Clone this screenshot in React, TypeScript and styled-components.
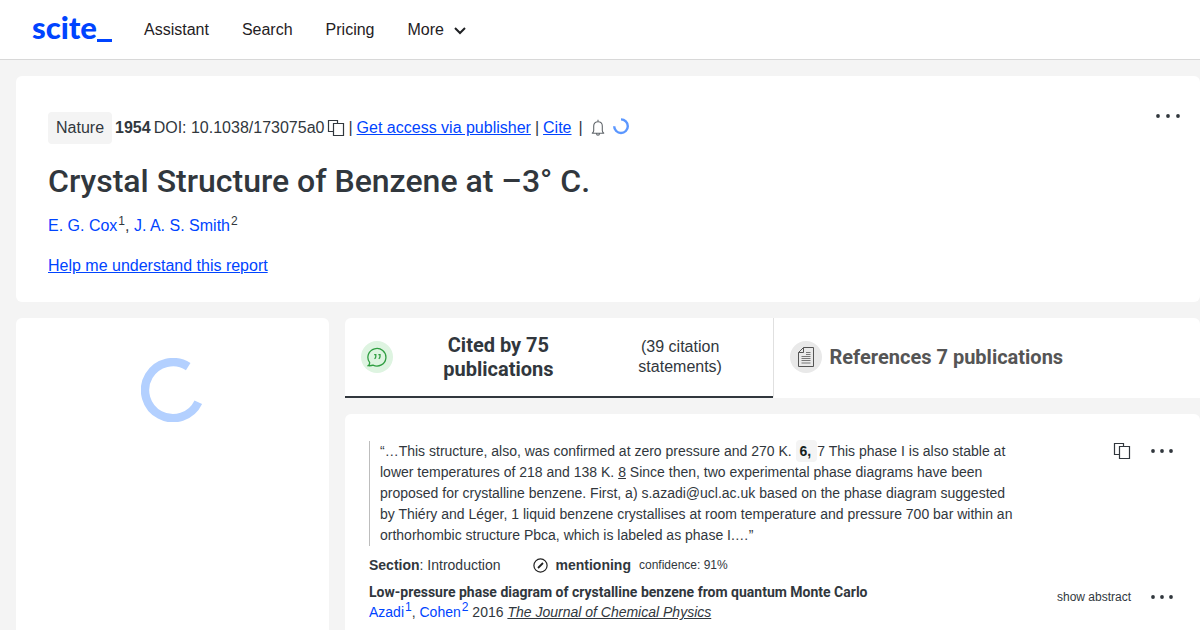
import React from 'react';
import styled, { createGlobalStyle } from 'styled-components';

const GlobalStyle = createGlobalStyle`
  *, *::before, *::after { box-sizing: border-box; }
  body {
    margin: 0;
    background: #f4f4f4;
    color: #31373d;
    font-family: "Liberation Sans", Arial, sans-serif;
    font-size: 16px;
    line-height: 24px;
  }
  h1, h2, p, blockquote { margin: 0; }
  button { font: inherit; color: inherit; background: none; border: 0; padding: 0; cursor: pointer; }
  svg { display: block; flex: none; }
`;

const headingFont = 'Roboto, "Liberation Sans", sans-serif';

const Page = styled.div`
  display: flex;
  flex-direction: column;
  height: 100vh;
  overflow: hidden;
`;

const Header = styled.header`
  display: flex;
  align-items: center;
  gap: 32px;
  flex: none;
  height: 60px;
  padding: 0 32px;
  background: #fff;
  border-bottom: 1px solid #d8d8d8;
`;

const Logo = styled.a`
  display: flex;
  align-items: flex-end;
  padding-bottom: 5px;
  color: #0044ff;
  font-family: Lato, sans-serif;
  font-size: 31px;
  font-weight: 900;
  line-height: 38px;
  text-decoration: none;
  &::after {
    content: "";
    width: 15px;
    height: 3px;
    margin-bottom: 4px;
    background: currentColor;
  }
`;

const Nav = styled.nav`
  display: flex;
  align-items: center;
  gap: 33px;
  color: #1f2124;
`;

const NavLink = styled.a`
  color: inherit;
  text-decoration: none;
`;

const NavButton = styled.button`
  display: flex;
  align-items: center;
  gap: 8px;
`;

const Content = styled.main`
  display: grid;
  grid-template-columns: 313px minmax(0, 1fr);
  grid-template-rows: auto minmax(0, 1fr);
  gap: 16px;
  flex: 1;
  min-height: 0;
  padding: 16px 0 0 16px;
`;

const Summary = styled.section`
  grid-column: 1 / -1;
  display: flex;
  justify-content: space-between;
  align-items: flex-start;
  padding: 36px 19px 24px 32px;
  background: #fff;
  border-radius: 6px;
`;

const MetaRow = styled.div`
  display: flex;
  align-items: center;
  gap: 3px;
  height: 32px;
`;

const Journal = styled.span`
  padding: 4px 8px;
  border-radius: 4px;
  background: #f4f4f4;
`;

const MetaLinks = styled.span`
  display: flex;
  align-items: center;
  gap: 4px;
`;

const MetaIcons = styled.span`
  display: flex;
  align-items: center;
  gap: 8px;
  margin-left: 4px;
`;

const IconButton = styled.button`
  display: flex;
`;

const Link = styled.a`
  color: #0044ff;
`;

const Author = styled.a`
  color: #0044ff;
  text-decoration: none;
`;

const Sup = styled.sup<{ $blue?: boolean }>`
  margin-left: 1px;
  color: ${(p) => (p.$blue ? '#0044ff' : 'inherit')};
  font-size: 12px;
  line-height: 0;
  vertical-align: 6px;
`;

const Title = styled.h1`
  margin: 16px 0 12px;
  font-family: ${headingFont};
  font-size: 32px;
  font-weight: 500;
  line-height: 42px;
`;

const Help = styled.p`
  margin-top: 16px;
`;

const Sidebar = styled.aside`
  display: flex;
  justify-content: center;
  padding-top: 40px;
  background: #fff;
  border-radius: 6px 6px 0 0;
`;

const Column = styled.div`
  display: flex;
  flex-direction: column;
  gap: 16px;
  min-height: 0;
`;

const Tabs = styled.div`
  display: grid;
  grid-template-columns: 1fr 1fr;
  flex: none;
  height: 80px;
  background: #fff;
  border-radius: 6px 6px 0 0;
`;

const Tab = styled.button<{ $active?: boolean }>`
  display: flex;
  align-items: center;
  gap: 8px;
  padding: 0 16px;
  color: ${(p) => (p.$active ? 'inherit' : '#555')};
  border-bottom: 2px solid ${(p) => (p.$active ? '#31373d' : 'transparent')};
  border-left: ${(p) => (p.$active ? '0' : '1px solid #e0e0e0')};
`;

const TabIcon = styled.span<{ $tint: string }>`
  display: grid;
  place-items: center;
  flex: none;
  width: 32px;
  height: 32px;
  border-radius: 50%;
  background: ${(p) => p.$tint};
`;

const TabTitle = styled.span`
  font-family: ${headingFont};
  font-size: 20px;
  font-weight: 700;
  line-height: 24px;
`;

const TabCount = styled(TabTitle)`
  flex: 5;
  padding: 0 32px;
`;

const TabNote = styled.span`
  flex: 4;
  padding: 0 24px;
  line-height: 20px;
`;

const Citation = styled.article`
  flex: 1;
  min-height: 0;
  padding: 27px 26px 0 24px;
  background: #fff;
  border-radius: 6px 6px 0 0;
  font-size: 14px;
`;

const CitationRow = styled.div`
  display: flex;
  justify-content: space-between;
  align-items: flex-start;
`;

const Quote = styled.blockquote`
  max-width: 648px;
  padding-left: 10px;
  border-left: 1px solid #bdbdbd;
  line-height: 21px;
`;

const Marker = styled.strong`
  padding: 3px 6px 3px 4px;
  border-radius: 4px;
  background: #f4f4f4;
  color: #14211d;
`;

const Details = styled.div`
  display: flex;
  align-items: center;
  gap: 8px;
  margin: 7px 0 5px;
`;

const SectionName = styled.span`
  margin-right: 24px;
`;

const Confidence = styled.span`
  font-size: 12px;
`;

const Source = styled.div`
  line-height: 20px;
`;

const SourceTitle = styled.strong`
  font-family: ${headingFont};
`;

const SourceLink = styled.a`
  color: inherit;
  font-style: italic;
`;

const Actions = styled.div`
  display: flex;
  align-items: center;
  gap: 19px;
  height: 20px;
  font-size: 12px;
`;

const SourceActions = styled(Actions)`
  margin-top: 5px;
`;

const Copy = () => (
  <svg width="18" height="18" viewBox="0 0 18 18" fill="none" stroke="currentColor" strokeWidth="1.2">
    <path d="M6 12.5H1.5v-11h9V4" />
    <path d="M6.5 4.5h10v12h-10z" />
  </svg>
);

const Dots = ({ step = 9 }: { step?: number }) => (
  <svg width={step * 2 + 6} height="8" fill="currentColor">
    <circle cx="3" cy="4" r="1.9" />
    <circle cx={3 + step} cy="4" r="1.9" />
    <circle cx={3 + step * 2} cy="4" r="1.9" />
  </svg>
);

const Chevron = () => (
  <svg width="16" height="16" viewBox="0 0 16 16" fill="none" stroke="currentColor" strokeWidth="2">
    <path d="M3 6l5 5 5-5" />
  </svg>
);

const Bell = () => (
  <svg width="14" height="18" viewBox="0 0 14 18" fill="none" stroke="#62676c" strokeWidth="1.1">
    <path d="M.8 14.3h12.4M1.2 14.2c1-.7 1.5-1.4 1.500-2.600V7c0-2.600 1.700-4.300 4.300-4.300s4.300 1.700 4.300 4.300v4.600c0 1.200.5 1.900 1.500 2.600M7 2.700V.8M5.500 14.500c0 1 .6 1.700 1.500 1.700s1.500-.7 1.500-1.700" />
  </svg>
);

const SmallSpinner = () => (
  <svg width="16" height="20" viewBox="0 0 16 20" fill="none" stroke="#5b97ff" strokeWidth="2.4">
    <path d="M8 1.4A6.800 6.800 0 1 1 1.200 8.200" />
  </svg>
);

const LargeSpinner = () => (
  <svg width="64" height="64" viewBox="0 0 64 64" fill="none" stroke="#b3d0ff" strokeWidth="8.4">
    <path d="M47.2 8.6A28 28 0 1 0 57.3 44.2" />
  </svg>
);

const SpeechIcon = () => (
  <svg width="20" height="20" viewBox="0 0 20 20" fill="none" stroke="#2f9e41" strokeWidth="1.3">
    <path d="M1.2 18.7c1-.8 1.6-1.8 1.4-3.3A9 8.8 0 1 1 6 18.2c-1.3.5-3 .6-4.8.5z" />
    <path d="M7.2 7.7h1.6v1.8c0 1-.5 1.8-1.3 2.3M11.4 7.7H13v1.8c0 1-.5 1.8-1.3 2.3" />
  </svg>
);

const DocumentIcon = () => (
  <svg width="16" height="20" viewBox="0 0 16 20" fill="none" stroke="#555">
    <path d="M5.5.5h10v19H.5v-14zM5.5.5v5h-5" />
    <path d="M8 5.5h4.5M8 7.5h4.5M3.5 9.5h9M3.5 11.5h9M3.5 13.5h9M3.5 16h9" stroke="#777" />
  </svg>
);

const MentionIcon = () => (
  <svg width="15" height="15" viewBox="0 0 15 15" fill="none" stroke="#222" strokeWidth="1.2">
    <circle cx="7.5" cy="7.5" r="6.6" />
    <path d="M5 10l5-5" strokeWidth="1.8" />
  </svg>
);

export default function App() {
  return (
    <Page>
      <GlobalStyle />
      <Header>
        <Logo href="#">scite</Logo>
        <Nav>
          <NavLink href="#">Assistant</NavLink>
          <NavLink href="#">Search</NavLink>
          <NavLink href="#">Pricing</NavLink>
          <NavButton>More <Chevron /></NavButton>
        </Nav>
      </Header>
      <Content>
        <Summary>
          <div>
            <MetaRow>
              <Journal>Nature</Journal>
              <strong>1954</strong>
              <span>DOI: 10.1038/173075a0</span>
              <IconButton aria-label="Copy DOI"><Copy /></IconButton>
              <MetaLinks>
                <span>|</span>
                <Link href="#">Get access via publisher</Link>
                <span>|</span>
                <Link href="#">Cite</Link>
              </MetaLinks>
              <MetaIcons>
                <span>|</span>
                <IconButton aria-label="Alert me"><Bell /></IconButton>
                <SmallSpinner />
              </MetaIcons>
            </MetaRow>
            <Title>Crystal Structure of Benzene at –3° C.</Title>
            <p>
              <Author href="#">E. G. Cox</Author><Sup>1</Sup>, <Author href="#">J. A. S. Smith</Author><Sup>2</Sup>
            </p>
            <Help><Link href="#">Help me understand this report</Link></Help>
          </div>
          <IconButton aria-label="More options"><Dots step={10} /></IconButton>
        </Summary>
        <Sidebar><LargeSpinner /></Sidebar>
        <Column>
          <Tabs>
            <Tab $active>
              <TabIcon $tint="#def4e1"><SpeechIcon /></TabIcon>
              <TabCount>Cited by 75 publications</TabCount>
              <TabNote>(39 citation statements)</TabNote>
            </Tab>
            <Tab>
              <TabIcon $tint="#e9e9e9"><DocumentIcon /></TabIcon>
              <TabTitle>References 7 publications</TabTitle>
            </Tab>
          </Tabs>
          <Citation>
            <CitationRow>
              <Quote>
                “…This structure, also, was confirmed at zero pressure and 270 K. <Marker>6,</Marker>7 This phase I is also stable at
                lower temperatures of 218 and 138 K. <u>8</u> Since then, two experimental phase diagrams have been
                proposed for crystalline benzene. First, a) s.azadi@ucl.ac.uk based on the phase diagram suggested
                by Thiéry and Léger, 1 liquid benzene crystallises at room temperature and pressure 700 bar within an
                orthorhombic structure Pbca, which is labeled as phase I.…”
              </Quote>
              <Actions>
                <IconButton aria-label="Copy citation"><Copy /></IconButton>
                <IconButton aria-label="Citation options"><Dots /></IconButton>
              </Actions>
            </CitationRow>
            <Details>
              <SectionName><strong>Section</strong>: Introduction</SectionName>
              <MentionIcon />
              <strong>mentioning</strong>
              <Confidence>confidence: 91%</Confidence>
            </Details>
            <CitationRow>
              <Source>
                <SourceTitle>Low-pressure phase diagram of crystalline benzene from quantum Monte Carlo</SourceTitle>
                <p>
                  <Author href="#">Azadi</Author><Sup $blue>1</Sup>, <Author href="#">Cohen</Author><Sup $blue>2</Sup> 2016{' '}
                  <SourceLink href="#">The Journal of Chemical Physics</SourceLink>
                </p>
              </Source>
              <SourceActions>
                <button>show abstract</button>
                <IconButton aria-label="Source options"><Dots /></IconButton>
              </SourceActions>
            </CitationRow>
          </Citation>
        </Column>
      </Content>
    </Page>
  );
}
